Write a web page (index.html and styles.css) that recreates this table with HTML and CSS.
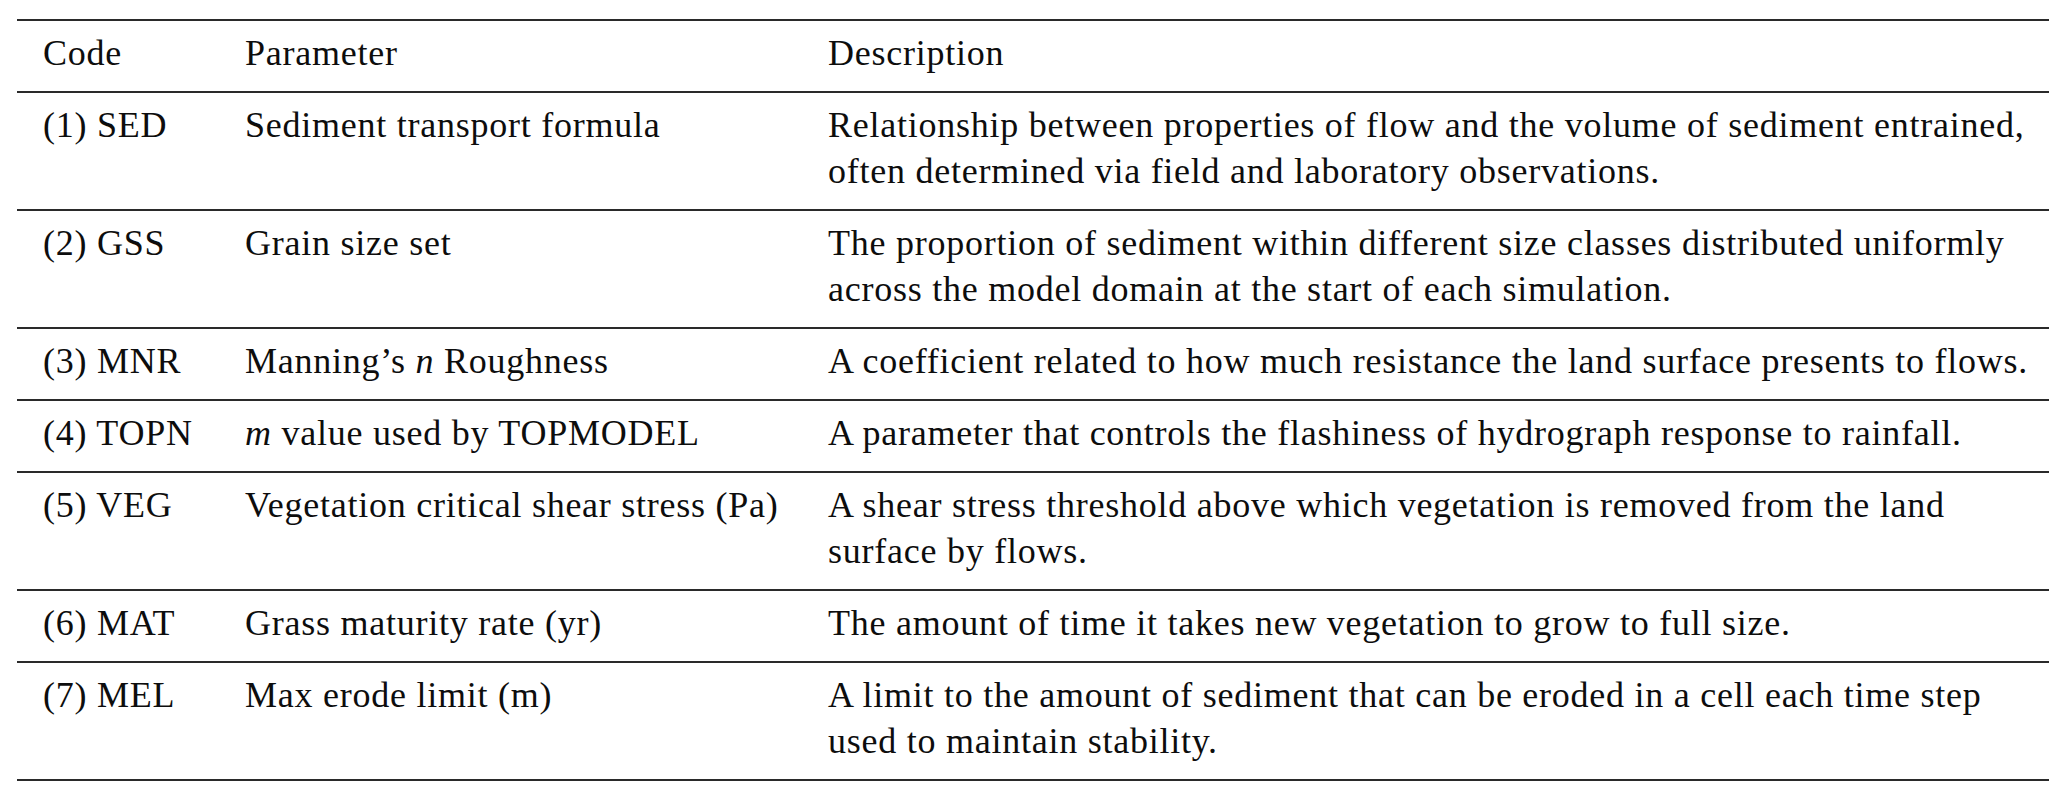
FILE: index.html
```html
<!DOCTYPE html>
<html lang="en">
<head>
<meta charset="utf-8">
<title>Model parameters</title>
<link rel="stylesheet" href="styles.css">
</head>
<body>
<div class="page">
<table class="params">
  <colgroup>
    <col class="c-code">
    <col class="c-param">
    <col class="c-desc">
  </colgroup>
  <thead>
    <tr><th>Code</th><th>Parameter</th><th>Description</th></tr>
  </thead>
  <tbody>
    <tr><td>(1) SED</td><td>Sediment transport formula</td><td>Relationship between properties of flow and the volume of sediment entrained,<br>often determined via field and laboratory observations.</td></tr>
    <tr><td>(2) GSS</td><td>Grain size set</td><td>The proportion of sediment within different size classes distributed uniformly<br>across the model domain at the start of each simulation.</td></tr>
    <tr><td>(3) MNR</td><td>Manning’s <i>n</i> Roughness</td><td>A coefficient related to how much resistance the land surface presents to flows.</td></tr>
    <tr><td>(4) TOPN</td><td><i>m</i> value used by TOPMODEL</td><td>A parameter that controls the flashiness of hydrograph response to rainfall.</td></tr>
    <tr><td>(5) VEG</td><td>Vegetation critical shear stress (Pa)</td><td>A shear stress threshold above which vegetation is removed from the land<br>surface by flows.</td></tr>
    <tr><td>(6) MAT</td><td>Grass maturity rate (yr)</td><td>The amount of time it takes new vegetation to grow to full size.</td></tr>
    <tr><td>(7) MEL</td><td>Max erode limit (m)</td><td>A limit to the amount of sediment that can be eroded in a cell each time step<br>used to maintain stability.</td></tr>
  </tbody>
</table>
</div>
</body>
</html>
```

FILE: styles.css
```css
html, body {
  margin: 0;
  padding: 0;
  background: #ffffff;
}
.page {
  padding: 19px 0 0 17px;
}
.params {
  border-collapse: collapse;
  table-layout: fixed;
  width: 2032px;
  font-family: "Liberation Serif", "Times New Roman", serif;
  font-size: 36px;
  letter-spacing: 0.75px;
  line-height: 46px;
  color: #0d0d0d;
}
.c-code { width: 228px; }
.c-param { width: 583px; }
.c-desc { width: 1221px; }
.params th,
.params td {
  font-weight: normal;
  text-align: left;
  vertical-align: top;
  padding: 9px 0 15px 0;
  white-space: nowrap;
  border-top: 2px solid #2a2a2a;
  border-bottom: 2px solid #2a2a2a;
}
.params th:first-child,
.params td:first-child {
  padding-left: 26px;
}
.params i {
  font-style: italic;
}
```
